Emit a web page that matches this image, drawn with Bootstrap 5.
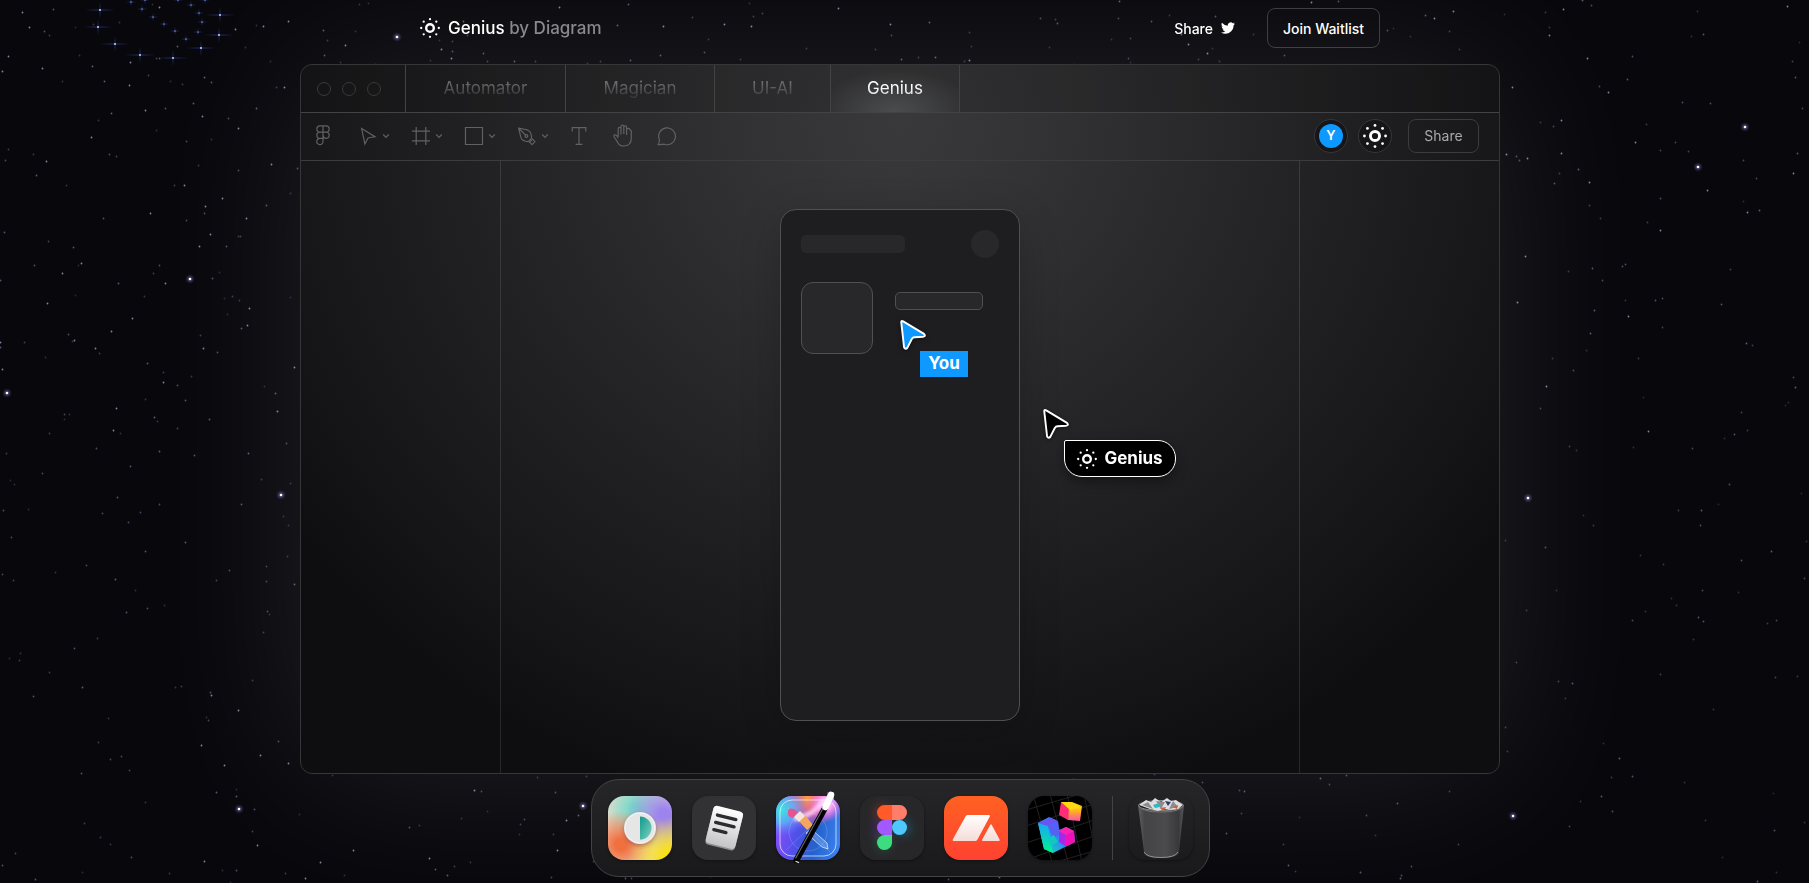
<!DOCTYPE html>
<html lang="en">
<head>
<meta charset="utf-8">
<meta name="viewport" content="width=device-width, initial-scale=1">
<title>Genius by Diagram</title>
<link href="https://cdn.jsdelivr.net/npm/bootstrap@5.3.0/dist/css/bootstrap.min.css" rel="stylesheet">
<style>
  body { background: #08080c; color: #fff; font-family: Inter, "Liberation Sans", sans-serif; padding-right: 9px; }
  .sky { position: fixed; inset: 0; width: 100%; height: 100%; z-index: 0; }
  .topbar { max-width: 960px; height: 56px; }
  .brand { font-size: 17px; line-height: 24px; font-weight: 500; }
  .brand .maker { color: #858587; }
  .top-link { font-size: 14px; font-weight: 500; }
  .btn-wait { height: 40px; width: 113px; padding: 0; font-size: 14px; font-weight: 500; color: #fff; background: #08080c; border: 1px solid #39393b; border-radius: 8px; white-space: nowrap; }
  .app-window { max-width: 1200px; margin-top: 8px; border: 1px solid #363638; border-radius: 12px;
    background: radial-gradient(ellipse 62% 100% at 50% 8%, #39393b 0%, #333335 18%, #29292b 40%, #1e1e20 65%, #151517 86%, #0e0e11 100%);
    box-shadow: 0 0 170px rgba(255,255,255,.11); }
  .tab-row { display: grid; grid-template-columns: 105px 160px 149px 116px 129px 1fr; height: 48px; background: rgba(0,0,0,.14); border-bottom: 1px solid #434345; border-radius: 12px 12px 0 0; }
  .tab-row > * { border-right: 1px solid #434345; }
  .tab-row > :last-child { border-right: 0; }
  .lights { gap: 11px; padding-left: 16px; }
  .lights i { width: 14px; height: 14px; border: 1px solid #39393b; border-radius: 50%; }
  .app-tab { color: #6e6e71; font-size: 17px; text-decoration: none; }
  .app-tab span { -webkit-mask-image: linear-gradient(#000 25%, rgba(0,0,0,.3) 80%); mask-image: linear-gradient(#000 25%, rgba(0,0,0,.3) 80%); }
  .app-tab.current { color: #fff; background: radial-gradient(ellipse 62% 90% at 50% 100%, #4b4c4e, rgba(75,76,78,0)); }
  .app-tab.current span { -webkit-mask-image: linear-gradient(#000 40%, rgba(0,0,0,.7)); mask-image: linear-gradient(#000 40%, rgba(0,0,0,.7)); }
  .tool-row { height: 48px; border-bottom: 1px solid #3c3c3e; padding: 0 20px 2px 0; }
  .tool { width: 44px; height: 44px; border: 0; padding: 0; background: none; color: #616164; display: flex; align-items: center; justify-content: center; }
  .tool.has-menu { width: 53px; gap: 4px; justify-content: flex-start; padding-left: 13px; }
  .tool svg, .ring svg { fill: none; stroke: currentColor; stroke-width: 1.2; }
  .ring { width: 34px; height: 34px; border: 1px solid #363638; border-radius: 50%; background: #161618; }
  .ring + .ring { margin-left: 10px; }
  .ring-text { width: 24px; height: 24px; border-radius: 50%; background: #0d99ff; font-size: 13px; font-weight: 600; }
  .btn-share { height: 34px; width: 71px; padding: 0; font-size: 14px; color: #a9a9ab; border: 1px solid #3c3c3e; border-radius: 8px; }
  .canvas { display: grid; grid-template-columns: 200px 1fr 200px; }
  .canvas > .side-l { border-right: 1px solid rgba(255,255,255,.11); }
  .canvas > .side-r { border-left: 1px solid rgba(255,255,255,.11); }
  .phone { width: 240px; height: 512px; padding: 20px; background: #1e1e20; border: 1px solid #505052; border-radius: 16px; box-shadow: 0 8px 40px rgba(0,0,0,.2); }
  .ph-bar { width: 104px; height: 18px; border-radius: 5px; background: #28282a; }
  .ph-dot { width: 28px; height: 28px; border-radius: 50%; background: #28282a; }
  .ph-row { gap: 22px; }
  .ph-tile { width: 72px; height: 72px; border: 1px solid #505052; border-radius: 12px; background: #28282a; }
  .ph-line { width: 88px; height: 18px; margin-top: 10px; border: 1px solid #505052; border-radius: 5px; background: #28282a; }
  .pointer-you { position: absolute; left: 118px; top: 109px; }
  .pointer-genius { position: absolute; left: calc(50% + 142px); top: 247px; }
  .pointer-you svg, .pointer-genius > svg { display: block; filter: drop-shadow(0 1px 2px rgba(0,0,0,.5)); }
  .tag-you { width: 48px; height: 26px; margin-left: 21px; background: #0d99ff; font-size: 17px; font-weight: 700; }
  .tag-genius { width: 112px; height: 37px; margin-left: 22px; gap: 7px; background: #000; border: 1px solid #fff; border-radius: 2px 18px 18px 18px; font-size: 17px; font-weight: 700; box-shadow: 0 4px 12px rgba(0,0,0,.4); }
  .dock { gap: 20px; padding: 16px; margin: 5px 0 6px; border: 1px solid #434345; border-radius: 28px; background: linear-gradient(#262628, #19191c); }
  .dock-app { width: 64px; height: 64px; padding: 0; border: 0; border-radius: 16px; background: none; box-shadow: 0 1px 3px rgba(0,0,0,.4); }
  .dock-app svg { display: block; overflow: visible; }
  .dock-rule { width: 1px; background: #434345; }
  .mesh { background: radial-gradient(circle at 100% 100%, #fbe00c 8%, rgba(251,216,20,0) 48%), radial-gradient(circle at 20% 76%, #f0703f 8%, rgba(240,112,63,0) 48%), radial-gradient(circle at 88% 30%, #9d83ee 8%, rgba(157,131,238,0) 52%), radial-gradient(circle at 42% 20%, #79d8c8 8%, rgba(121,216,200,0) 50%), #e9dfce; }
</style>
<script src="https://cdn.jsdelivr.net/npm/bootstrap@5.3.0/dist/js/bootstrap.bundle.min.js" defer></script>
</head>
<body class="d-flex flex-column min-vh-100">
<svg width="0" height="0" class="position-absolute" aria-hidden="true">
  <symbol id="sun" viewBox="0 0 20 20">
    <circle cx="10" cy="10" r="3.8" fill="none" stroke="#fff" stroke-width="2.4"/>
    <g fill="#fff" stroke="none"><circle cx="10" cy="1.2" r="1.15"/><circle cx="10" cy="18.8" r="1.15"/><circle cx="1.2" cy="10" r="1.15"/><circle cx="18.8" cy="10" r="1.15"/><circle cx="3.7" cy="3.7" r="1.15"/><circle cx="16.3" cy="3.7" r="1.15"/><circle cx="3.7" cy="16.3" r="1.15"/><circle cx="16.3" cy="16.3" r="1.15"/></g>
  </symbol>
  <symbol id="caret" viewBox="0 0 8 6"><path d="M1.2 1.5 4 4.3 6.8 1.5"/></symbol>
  <symbol id="pointer" viewBox="0 0 28 32"><path d="M2.3 3.6Q2 1.2 4.2 2.4L25 14.9Q27.1 17 24.2 17.7L15.6 18.3Q13.8 18.4 12.8 20L8.4 28.6Q6.7 31 5.1 28.5Z" stroke="#fff" stroke-width="1.9" stroke-linejoin="round"/></symbol>
</svg>
<svg class="sky" aria-hidden="true">
  <defs>
    <radialGradient id="flare"><stop offset="0" stop-color="#4a68e8" stop-opacity=".7"/><stop offset=".5" stop-color="#3c56c8" stop-opacity=".25"/><stop offset="1" stop-color="#3048b8" stop-opacity="0"/></radialGradient>
    <radialGradient id="halo"><stop offset="0" stop-color="#a89cf0" stop-opacity=".55"/><stop offset="1" stop-color="#6a60c0" stop-opacity="0"/></radialGradient>
  </defs>
</svg>

<header class="topbar w-100 mx-auto d-flex align-items-center justify-content-between position-relative flex-shrink-0">
  <a href="#" class="brand d-flex align-items-center text-white text-decoration-none"><svg width="20" height="20" class="me-2" aria-hidden="true"><use href="#sun"/></svg><span>Genius <span class="maker">by Diagram</span></span></a>
  <div class="d-flex align-items-center">
    <a href="#" class="top-link d-flex align-items-center gap-2 text-white text-decoration-none me-4 pe-2">Share
      <svg width="14" height="12" viewBox="0 0 16 13" fill="#fff" aria-hidden="true"><path d="M5.03 13c6.04 0 9.34-5 9.34-9.34v-.42A6.7 6.7 0 0 0 16 1.54a6.6 6.6 0 0 1-1.89.52A3.3 3.3 0 0 0 15.55.24a6.6 6.6 0 0 1-2.08.8 3.28 3.28 0 0 0-5.6 3A9.3 9.3 0 0 1 1.12.6a3.3 3.3 0 0 0 1.02 4.38 3.2 3.2 0 0 1-1.49-.41v.04a3.3 3.3 0 0 0 2.64 3.22 3.2 3.2 0 0 1-1.48.06 3.3 3.3 0 0 0 3.06 2.27A6.6 6.6 0 0 1 0 11.52 9.3 9.3 0 0 0 5.03 13"/></svg></a>
    <button type="button" class="btn-wait">Join Waitlist</button>
  </div>
</header>

<main class="app-window w-100 mx-auto flex-grow-1 d-flex flex-column position-relative">
  <nav class="tab-row" aria-label="Products">
    <div class="lights d-flex align-items-center"><i></i><i></i><i></i></div>
    <a href="#" class="app-tab d-flex align-items-center justify-content-center"><span>Automator</span></a>
    <a href="#" class="app-tab d-flex align-items-center justify-content-center"><span>Magician</span></a>
    <a href="#" class="app-tab d-flex align-items-center justify-content-center"><span>UI-AI</span></a>
    <a href="#" class="app-tab current d-flex align-items-center justify-content-center" aria-current="page"><span>Genius</span></a>
    <div></div>
  </nav>
  <div class="tool-row d-flex align-items-center">
    <button type="button" class="tool" aria-label="Menu"><svg width="14" height="21" viewBox="0 0 14 21"><path d="M7 .8H4a3.1 3.1 0 0 0 0 6.3h3zm0 0h3a3.1 3.1 0 0 1 0 6.3H7zm0 6.3H4a3.1 3.1 0 0 0 0 6.3h3zm0 6.3H4a3.15 3.15 0 1 0 3 3.2zM10 7.1a3.1 3.1 0 1 1-3 3.2V7.1z"/></svg></button>
    <button type="button" class="tool has-menu" aria-label="Move"><svg width="20" height="20" viewBox="0 0 20 20"><path d="M3.6 2.6 17 10.8 10 12 6.9 18z"/></svg><svg width="8" height="6"><use href="#caret"/></svg></button>
    <button type="button" class="tool has-menu" aria-label="Frame"><svg width="20" height="20" viewBox="0 0 20 20"><path d="M5.2 1v18M14.8 1v18M1 5.2h18M1 14.8h18"/></svg><svg width="8" height="6"><use href="#caret"/></svg></button>
    <button type="button" class="tool has-menu" aria-label="Rectangle"><svg width="20" height="20" viewBox="0 0 20 20"><path d="M1.5 1.5h17v17h-17z"/></svg><svg width="8" height="6"><use href="#caret"/></svg></button>
    <button type="button" class="tool has-menu" aria-label="Pen"><svg width="20" height="20" viewBox="0 0 20 20"><path d="M1.6 2 11 4.2q3.5 1.5 3.6 8L11.3 15.6q-6 0-7.4-4.2zM1.6 2l7 7.2M12.6 16.2l3-3 2.4 2.4-3 3z" stroke-linejoin="round"/><circle cx="9.4" cy="10" r="1.4"/></svg><svg width="8" height="6"><use href="#caret"/></svg></button>
    <button type="button" class="tool" aria-label="Text"><svg width="16" height="20" viewBox="0 0 16 20"><path d="M1.2 5.5V1.6h13.6v3.9M8 1.6v16.8M4.6 18.4h6.8"/></svg></button>
    <button type="button" class="tool" aria-label="Hand"><svg width="20" height="23" viewBox="0 0 20 23"><path d="M5.2 12.5V4.8q0-1.5 1.4-1.5T8 4.8v5.7M8 10V2.4Q8 1 9.4 1t1.4 1.4V10M10.8 10V3.2q0-1.4 1.4-1.4t1.4 1.4V11M13.6 11V5.8q0-1.4 1.6-1.4t1.8 1.4q.8.2 1.3 1.2V14q0 8-7.6 8-4.2 0-6-3.6L1.2 13q-.7-1.6.5-2.1 1.2-.4 2 .6l1.5 2.4" stroke-linejoin="round"/></svg></button>
    <button type="button" class="tool" aria-label="Comment"><svg width="20" height="20" viewBox="0 0 20 20"><path d="M1 18.6Q2.8 17 2.2 13.2A8.4 8.4 0 1 1 7.2 18.2Q4.6 18.8 1 18.6z" stroke-linejoin="round"/></svg></button>
    <div class="d-flex align-items-center ms-auto">
      <div class="ring d-flex align-items-center justify-content-center"><span class="ring-text d-flex align-items-center justify-content-center">Y</span></div>
      <div class="ring d-flex align-items-center justify-content-center"><svg width="24" height="24" aria-label="Genius" role="img"><use href="#sun"/></svg></div>
      <button type="button" class="btn-share bg-transparent ms-3">Share</button>
    </div>
  </div>
  <div class="canvas flex-grow-1">
    <div class="side-l"></div>
    <section class="position-relative d-flex align-items-center justify-content-center pb-1" aria-label="Canvas">
      <div class="phone position-relative">
        <div class="d-flex align-items-center justify-content-between"><div class="ph-bar"></div><div class="ph-dot"></div></div>
        <div class="ph-row d-flex pt-4"><div class="ph-tile"></div><div class="ph-line"></div></div>
        <div class="pointer-you"><svg width="28" height="32" fill="#0d99ff" aria-hidden="true"><use href="#pointer"/></svg><div class="tag-you d-flex align-items-center justify-content-center">You</div></div>
      </div>
      <div class="pointer-genius"><svg width="28" height="32" fill="#000" aria-hidden="true"><use href="#pointer"/></svg><div class="tag-genius d-flex align-items-center justify-content-center"><svg width="20" height="20" aria-hidden="true"><use href="#sun"/></svg>Genius</div></div>
    </section>
    <div class="side-r"></div>
  </div>
</main>

<footer class="d-flex justify-content-center position-relative">
  <div class="dock d-flex">
    <button type="button" class="dock-app mesh" aria-label="Automator"><svg width="64" height="64" viewBox="0 0 64 64"><defs><linearGradient id="teal" x1="0" y1="0" x2="1" y2="1"><stop offset="0" stop-color="#0f9a8a"/><stop offset="1" stop-color="#7fd0c0"/></linearGradient><filter id="soft" x="-50%" y="-50%" width="200%" height="200%"><feDropShadow dx="0" dy="2" stdDeviation="2" flood-color="#733" flood-opacity=".5"/></filter></defs><circle cx="32" cy="32" r="16" fill="#e6e6e6" filter="url(#soft)"/><circle cx="32" cy="32" r="15" fill="none" stroke="#fff" stroke-opacity=".5"/><path d="M32 20.5a11.5 11.5 0 0 1 0 23z" fill="url(#teal)"/></svg></button>
    <button type="button" class="dock-app" aria-label="Notes"><svg width="64" height="64" viewBox="0 0 64 64"><defs><linearGradient id="paper" x1="0" y1="0" x2="0" y2="1"><stop offset="0" stop-color="#fff"/><stop offset="1" stop-color="#c4c4c6"/></linearGradient></defs><rect width="64" height="64" rx="16" fill="#323234"/><g transform="rotate(14 32 32)"><rect x="17" y="12.5" width="30.500" height="39.500" rx="4" fill="#8f8f92"/><rect x="17" y="12" width="30.500" height="38.500" rx="4" fill="url(#paper)"/><path d="M22.500 21h19M22.500 28.500h19M22.500 36h12.500" stroke="#2c2c2e" stroke-width="3.300" stroke-linecap="round"/></g></svg></button>
    <button type="button" class="dock-app" aria-label="Magician"><svg width="64" height="64" viewBox="0 0 64 64"><defs>
      <linearGradient id="mg" x1="0" y1=".4" x2="1" y2=".6"><stop offset="0" stop-color="#8a4cff"/><stop offset=".35" stop-color="#5050e8"/><stop offset=".65" stop-color="#2462cc"/><stop offset="1" stop-color="#3a80ee"/></linearGradient>
      <radialGradient id="m1" cx=".5" cy=".02" r=".5"><stop offset="0" stop-color="#ffa038"/><stop offset=".5" stop-color="#f8668e" stop-opacity=".8"/><stop offset="1" stop-color="#f060d0" stop-opacity="0"/></radialGradient>
      <radialGradient id="m2" cx=".08" cy=".22" r=".42"><stop offset="0" stop-color="#38e8dc"/><stop offset=".5" stop-color="#58b8f8" stop-opacity=".8"/><stop offset="1" stop-color="#6080ff" stop-opacity="0"/></radialGradient>
      <radialGradient id="m3" cx=".78" cy=".12" r=".3"><stop offset="0" stop-color="#fff"/><stop offset=".4" stop-color="#ff9cf0" stop-opacity=".9"/><stop offset="1" stop-color="#f050e0" stop-opacity="0"/></radialGradient>
      <filter id="glow" x="-60%" y="-60%" width="220%" height="220%"><feGaussianBlur stdDeviation="1.600"/></filter></defs>
      <rect width="64" height="64" rx="16" fill="url(#mg)"/><rect width="64" height="64" rx="16" fill="url(#m1)"/><rect width="64" height="64" rx="16" fill="url(#m2)"/><rect width="64" height="64" rx="16" fill="url(#m3)"/>
      <rect x="4" y="4" width="56" height="56" rx="12" fill="none" stroke="#fff" stroke-opacity=".65"/>
      <circle cx="32" cy="36" r="19" fill="none" stroke="#fff" stroke-opacity=".22" stroke-width=".7"/><path d="M10 54 54 12M12 12l42 44" stroke="#fff" stroke-opacity=".22" stroke-width=".7"/>
      <path d="M18 23q14-2 23-11t12-8" fill="none" stroke="#ffd6fa" stroke-width="5" stroke-opacity=".8" filter="url(#glow)"/>
      <path d="m30 37 5-4 16 14 1 6-6-2z" fill="#9cc4ff" fill-opacity=".35" stroke="#fff" stroke-opacity=".7" stroke-width=".9"/>
      <path d="m22 24 7-5 8 10-6 5z" fill="#f2a660"/><path d="m18 21 6-6 5 5-6 6z" fill="#f4e4dc"/><path d="M12 16q0-5 6-3l4 3-5 6q-6-1-5-6" fill="#e6538e"/>
      <path d="M20.500 64 49 12" stroke="#000" stroke-width="6" stroke-linecap="round"/><path d="M19.500 62.500 47.500 11.500" stroke="#66666c" stroke-width="1.200"/>
      <path d="M53 4 56-1" stroke="#b8b0ff" stroke-width="9" stroke-linecap="round" filter="url(#glow)" opacity=".8"/><path d="M49.500 11 55-1" stroke="#fff" stroke-width="6.500" stroke-linecap="round"/><path d="M19.500 65.200l3.500 1.400" stroke="#ddd" stroke-width="1.200"/></svg></button>
    <button type="button" class="dock-app" aria-label="Figma"><svg width="64" height="64" viewBox="0 0 64 64"><defs><filter id="haze" x="-50%" y="-50%" width="200%" height="200%"><feGaussianBlur stdDeviation="4"/></filter></defs><rect width="64" height="64" rx="16" fill="#272729"/><g filter="url(#haze)" opacity=".2"><circle cx="22" cy="16" r="9" fill="#f53"/><circle cx="43" cy="32" r="9" fill="#1bf"/><circle cx="21" cy="33" r="9" fill="#83f"/><circle cx="24" cy="47" r="8" fill="#2d8"/></g><path d="M32 9v15h-7.500a7.500 7.500 0 0 1 0-15z" fill="#ff5a28"/><path d="M32 9h7.500a7.500 7.500 0 0 1 0 15H32z" fill="#ff7d69"/><path d="M32 24v15h-7.500a7.500 7.500 0 0 1 0-15z" fill="#a259ff"/><circle cx="39.500" cy="31.500" r="7.500" fill="#4fc8ff"/><path d="M32 39v8a7.500 7.500 0 1 1-7.500-8z" fill="#3edc81"/></svg></button>
    <button type="button" class="dock-app" aria-label="Prototype"><svg width="64" height="64" viewBox="0 0 64 64"><defs><linearGradient id="org" x1="0" y1="0" x2="0" y2="1"><stop offset="0" stop-color="#ff6122"/><stop offset="1" stop-color="#ff4232"/></linearGradient><linearGradient id="wht" x1="0" y1="0" x2="0" y2="1"><stop offset="0" stop-color="#fff"/><stop offset="1" stop-color="#f6dcd8"/></linearGradient></defs><rect width="64" height="64" rx="16" fill="url(#org)"/><path d="M23.500 19H45q1.500 0 .8 1.500L33.500 43.500q-.8 1.500-2.500 1.500H9.500Q8 45 9 43L21.500 20.500Q22.300 19 23.500 19M46.200 29q.8-1.400 1.600 0l7.800 14.500q.6 1.500-.8 1.500H39q-1.500 0-.8-1.500z" fill="url(#wht)"/></svg></button>
    <button type="button" class="dock-app" aria-label="Blocks"><svg width="64" height="64" viewBox="0 0 64 64"><defs><clipPath id="rc"><rect width="64" height="64" rx="16"/></clipPath><linearGradient id="c1" x1="0" y1="0" x2="0" y2="1"><stop offset="0" stop-color="#18a8f8"/><stop offset="1" stop-color="#00f58c"/></linearGradient><linearGradient id="c2" x1="1" y1="0" x2="0" y2="1"><stop offset="0" stop-color="#7a3cff"/><stop offset=".55" stop-color="#2890f0"/><stop offset="1" stop-color="#10f0a0"/></linearGradient><linearGradient id="c3" x1="0" y1="0" x2="0" y2="1"><stop offset="0" stop-color="#ffe000"/><stop offset=".5" stop-color="#ff9a3c"/><stop offset="1" stop-color="#ff50b0"/></linearGradient></defs><g clip-path="url(#rc)"><rect width="64" height="64" fill="#000"/><path d="M-2 14 66-6M-2 30 66 8M-2 47 66 24M-2 64 66 40M14 70 66 55M5-2 24 66M22-2 40 66M39-2 54 66M56-2 66 50" stroke="#29292b" stroke-width=".8"/></g><path d="m10 27 6 26 9 4 22-11-1-11-8-4-7 3-3-10-7-3z" fill="url(#c2)"/><path d="m10 27 6 26 9 4-5-27z" fill="url(#c1)"/><path d="m10 27 13-5 7 3-10 5z" fill="#6b54f4"/><path d="m20 30 10-5 2 14-7 3z" fill="#5560f4"/><path d="m31 35 7 4-1 11-6-4z" fill="#a428e8"/><path d="m38 39 8-4 1 11-10 5z" fill="#f010b8"/><path d="m31 35 7-4 8 4-8 4z" fill="#ff1fb0"/><path d="m20 42 6-3 4 7-7 4z" fill="#10c8c0"/><path d="m33 6 10 1-3 17-9-5z" fill="#ff2c78"/><path d="m41 12 13-2-2 15-12-1z" fill="url(#c3)"/><path d="m33 6 11 0 10 4-12 4z" fill="#ffd810"/></svg></button>
    <div class="d-flex gap-3"><div class="dock-rule"></div>
    <button type="button" class="dock-app" aria-label="Trash"><svg width="64" height="64" viewBox="0 0 64 64"><defs><linearGradient id="bin"><stop offset="0" stop-color="#606062"/><stop offset=".15" stop-color="#444446"/><stop offset=".6" stop-color="#4b4b4d"/><stop offset=".88" stop-color="#39393b"/><stop offset="1" stop-color="#5a5a5c"/></linearGradient></defs><path d="M9 9q23-9 46 0l-5 47q-1 6-18 6t-17-6z" fill="url(#bin)"/><ellipse cx="32" cy="9.500" rx="22.500" ry="5" fill="#1a1a1c" stroke="#8a8a8c"/><path d="m10 9 7-5 5 2 4-4 6 4 6-4 4 3 5-1 7 5-5 4-8 1-6-1-6 2-8-2z" fill="#dededf"/><path d="m13 9 6-3 5 7zM27 5l5 8 4-7zM44 5l-4 8 9-2z" fill="#8c8c90"/><path d="m24 9 6-2 1 4-5 1z" fill="#2eb8c0"/><path d="m36 5 6 1-3 4z" fill="#303a70"/><path d="m31 12 6-1-2 4zM44 11l5-2-1 4z" fill="#c66040"/><path d="M10 10q3 6 22 6t22-6" fill="none" stroke="#77777a"/><path d="M15 56q3 5.500 17 5.500t17-5.500" fill="none" stroke="#8f8f91"/></svg></button></div>
  </div>
</footer>

<script>
  const sky = document.querySelector('.sky');
  const ns = 'http://www.w3.org/2000/svg';
  const add = (name, attrs) => {
    const el = document.createElementNS(ns, name);
    for (const k in attrs) el.setAttribute(k, attrs[k]);
    sky.appendChild(el);
  };
  const dot = (x, y, fill, o) => add('circle', { cx: x + .5, cy: y + .5, r: .9, fill, 'fill-opacity': o });
  const bigStar = (x, y) => { add('circle', { cx: x, cy: y, r: 5, fill: 'url(#halo)' }); add('circle', { cx: x, cy: y, r: 1.3, fill: '#fff' }); };

  // Constellation: crossed flares of two sizes.
  const flare = (x, y, w, h) => {
    add('ellipse', { cx: x, cy: y, rx: w, ry: 1, fill: 'url(#flare)' });
    add('ellipse', { cx: x, cy: y, rx: 1, ry: h, fill: 'url(#flare)' });
    add('circle', { cx: x, cy: y, r: w > 12 ? 1 : .6, fill: '#c8d4ff' });
  };
  [[100,10],[98,27],[115,44],[140,55],[173,58],[201,48],[219,35],[220,15]].forEach(p => flare(p[0], p[1], 18, 10));
  [[131,2],[142,9],[153,17],[164,24],[175,31],[186,39],[191,5],[199,13],[202,22],[198,32],[205,0],[178,0],[145,0]].forEach(p => flare(p[0], p[1], 6, 5));

  [[397,37],[190,279],[7,393],[1745,127],[1698,167],[239,809],[583,806],[281,495],[1528,498],[1513,816]].forEach(p => bigStar(p[0], p[1]));

  // Medium stars with a faint violet cast.
  const lit = [[22,12],[29,27],[8,56],[2,71],[42,68],[130,62],[129,85],[145,110],[202,116],[91,137],[184,185],[205,206],[222,198],[238,128],[284,87],[235,29],[288,21],[345,45],[271,164],[199,246],[246,218],[62,273],[81,263],[165,283],[132,318],[47,303],[111,331],[0,342],[2,369],[163,382],[116,408],[74,340],[249,308],[247,325],[203,348],[294,367],[113,430],[277,411],[95,348],[150,213],[210,234],[46,161],[159,7],[263,26],[304,117],[1453,11],[1434,18],[1563,9],[1549,35],[1512,87],[1527,158],[1561,120],[1589,182],[1608,92],[1587,58],[1635,142],[1660,230],[1747,212],[1707,190],[1787,6],[1793,173],[1525,256],[1517,302],[1546,386],[1648,431],[1561,153],[1506,154],[1628,316],[201,745],[260,755],[224,765],[211,695],[238,710],[257,845],[204,861],[353,850],[305,878],[320,862],[429,858],[288,763],[474,790],[557,850],[566,820],[559,7],[663,26],[751,26],[838,8],[724,24],[890,24],[969,60],[1188,44],[1207,53],[1311,2],[1296,42],[441,49],[451,58]];
  lit.forEach(p => dot(p[0], p[1], '#bcb4e0', .7));

  // Dim background dust, spread with a fixed seed so it never shifts between visits.
  let seed = 41;
  const rnd = () => (seed = (seed * 16807) % 2147483647) / 2147483647;
  const width = sky.clientWidth, height = sky.clientHeight;
  for (let i = 0; i < 1150; i++) {
    const x = Math.floor(rnd() * width), y = Math.floor(rnd() * height), o = .22 + rnd() * .38;
    if (x > width * .78 && rnd() < .35) continue;
    dot(x, y, '#9a90c8', o.toFixed(2));
  }
</script>
</body>
</html>
